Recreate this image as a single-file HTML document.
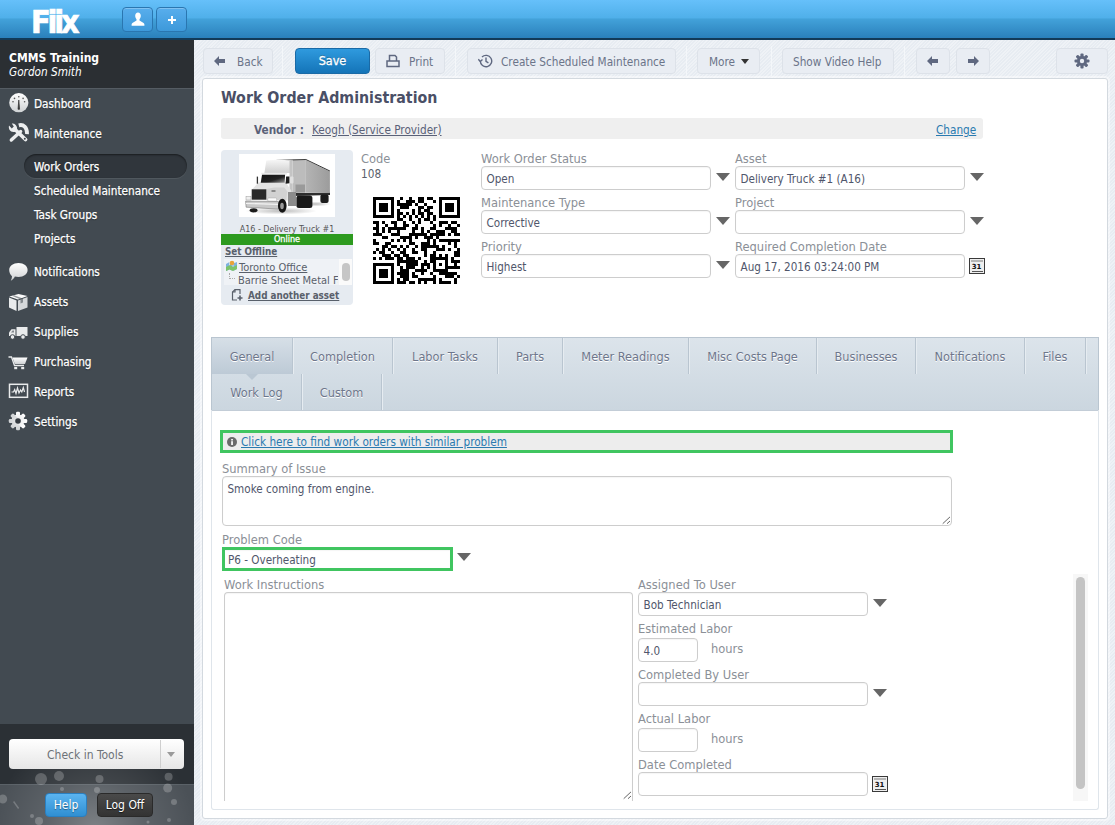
<!DOCTYPE html>
<html><head><meta charset="utf-8"><title>Work Order Administration</title>
<style>
*{box-sizing:border-box;margin:0;padding:0}
html,body{width:1115px;height:825px;overflow:hidden}
body{position:relative;font-family:"DejaVu Sans Condensed","Liberation Sans",sans-serif;font-size:11.7px;color:#4a5068;background:#e7ecf2;
 background-image:repeating-linear-gradient(135deg,rgba(255,255,255,.32) 0,rgba(255,255,255,.32) 1.100px,rgba(255,255,255,0) 1.100px,rgba(255,255,255,0) 2.400px)}
.abs{position:absolute}
a{color:inherit}
/* header */
#hdr{position:absolute;left:0;top:0;width:1115px;height:40px;background:linear-gradient(#66c0fa 0,#50b0ea 46%,#42a1d9 51%,#2a80bb 100%);border-bottom:2px solid #123a58}
.hb{position:absolute;top:7px;height:25px;width:31px;border:1px solid #2a76b0;border-radius:4px;background:linear-gradient(#58aeed,#3d99da);box-shadow:inset 0 1px 0 rgba(255,255,255,.25)}
#logo{position:absolute;left:31px;top:3px;font-family:"DejaVu Sans Condensed","Liberation Sans",sans-serif;font-weight:bold;font-size:32px;color:#fff;letter-spacing:-3.1px;-webkit-text-stroke:.7px #fff;line-height:38px}
/* sidebar */
#side{position:absolute;left:0;top:40px;width:194px;height:785px;background:#424a51}
#user{position:absolute;left:0;top:0;width:194px;height:49px;background:#2b2f33;color:#fff;border-bottom:1px solid #555c63}
.mi{position:absolute;left:34px;margin-top:1px;color:#fff;font-size:11.7px;line-height:14px;white-space:nowrap;text-shadow:0 1px 1px rgba(0,0,0,.5);-webkit-text-stroke:.25px #fff}
.ic{position:absolute;left:8px}
#pill{position:absolute;left:24px;top:114px;width:163px;height:24px;border-radius:12px;background:#30363c;box-shadow:inset 0 1px 2px rgba(0,0,0,.5),0 1px 0 rgba(255,255,255,.08)}
#tools{position:absolute;left:0;top:684px;width:194px;height:60px;background:#2b3035}
#toolbtn{position:absolute;left:9px;top:15px;width:175px;height:30px;border-radius:4px;background:linear-gradient(#ffffff,#e6e6e6);color:#6d7278;font-size:12px;line-height:30px}
#foot{position:absolute;left:0;top:744px;width:194px;height:41px;overflow:hidden}
/* toolbar */
.tb{position:absolute;top:48px;height:26px;border:1px solid #dde2e9;border-radius:4px;background:#e9edf3;color:#6b7489;font-size:11.7px;line-height:26px;white-space:nowrap}
.sep{position:absolute;top:46px;width:1px;height:30px;background:#dbe1e8;border-right:1px solid #f4f7fa}
#panel{position:absolute;left:202px;top:78px;width:906px;height:741px;background:#fff;border:1px solid #d3d9df;border-radius:3px;box-shadow:0 0 0 2px rgba(255,255,255,.45)}
.lbl{position:absolute;font-family:"DejaVu Sans","Liberation Sans",sans-serif;font-size:11.5px;color:#8b9097;white-space:nowrap;line-height:14px}
.inp{position:absolute;height:24px;border:1px solid #cdcdcd;border-radius:4px;background:#fff;color:#50566b;line-height:22px;padding:1px 0 0 4.500px;font-size:11.6px;white-space:nowrap;box-shadow:inset 0 1px 1px rgba(0,0,0,.04)}
.arr{position:absolute;width:0;height:0;border-left:7px solid transparent;border-right:7px solid transparent;border-top:8px solid #666}
.tab{position:absolute;height:36px;border-right:1px solid #b9c5d0;box-shadow:1px 0 0 #e6ecf1;color:#6d768b;font-size:12.6px;line-height:38px;text-align:center;text-shadow:0 1px 0 #fff;white-space:nowrap}
.cal{position:absolute;width:16px;height:16px;border:1px solid #3a3a3a;background:#efefef}
.cal i{position:absolute;left:1px;top:1px;width:12px;height:2px;background:#b5b5b5}
.cal i:after{content:"";position:absolute;left:1px;top:11px;width:11px;height:1px;background:#555}
.cal b{position:absolute;left:0;top:4px;width:13px;text-align:center;font-family:"DejaVu Sans","Liberation Sans",sans-serif;font-weight:bold;font-size:7px;line-height:9px;letter-spacing:-.2px;color:#111}
</style></head><body>

<div id="hdr">
 <div id="logo">Fiix</div>
 <div class="hb" style="left:122px"><svg class="abs" style="left:8px;top:4px" width="14" height="15" viewBox="0 0 14 14" preserveAspectRatio="none"><path d="M7 0.5c1.7 0 2.8 1.3 2.8 3.1 0 1.3-.6 2.5-1.300 3.200v1.200l4.100 2.200c.5.300.8.800.8 1.400v1.200H.6v-1.200c0-.6.3-1.100.8-1.400l4.100-2.200V6.800C4.800 6.100 4.200 4.900 4.200 3.600 4.200 1.800 5.300.5 7 .5z" fill="#fff"/></svg></div>
 <div class="hb" style="left:156px"><svg class="abs" style="left:10px;top:7px" width="10" height="10" viewBox="0 0 10 10"><path d="M4 1h2v3h3v2H6v3H4V6H1V4h3z" fill="#fff"/></svg></div>
</div>

<div id="side">
 <div id="user">
  <div class="abs" style="left:9px;top:11px;font-weight:bold;font-size:12px;line-height:14px;white-space:nowrap">CMMS Training</div>
  <div class="abs" style="left:9px;top:25px;font-style:italic;font-size:11.7px;line-height:14px;white-space:nowrap">Gordon Smith</div>
 </div>
 <div id="pill"></div>
 <div class="mi" style="top:56px">Dashboard</div>
 <div class="mi" style="top:86px">Maintenance</div>
 <div class="mi" style="top:119px">Work Orders</div>
 <div class="mi" style="top:143px">Scheduled Maintenance</div>
 <div class="mi" style="top:167px">Task Groups</div>
 <div class="mi" style="top:191px">Projects</div>
 <div class="mi" style="top:224px">Notifications</div>
 <div class="mi" style="top:254px">Assets</div>
 <div class="mi" style="top:284px">Supplies</div>
 <div class="mi" style="top:314px">Purchasing</div>
 <div class="mi" style="top:344px">Reports</div>
 <div class="mi" style="top:374px">Settings</div>

 <svg class="abs" style="left:9px;top:53px" width="20" height="20" viewBox="0 0 20 20"><defs><linearGradient id="ig" x1="0" y1="0" x2="0" y2="1"><stop offset="0" stop-color="#fff"/><stop offset="1" stop-color="#cfd2d4"/></linearGradient></defs><circle cx="9.800" cy="9.700" r="9.600" fill="url(#ig)"/><path d="M9 16.300L9.800 7l.8 9.300z" fill="#333" stroke="#333" stroke-width=".7"/><g fill="#555"><circle cx="9.800" cy="3.800" r=".8"/><circle cx="5.500" cy="5.400" r=".8"/><circle cx="14.100" cy="5.400" r=".8"/><circle cx="4" cy="8.700" r=".8"/><circle cx="15.600" cy="8.700" r=".8"/></g></svg>
 <svg class="abs" style="left:8px;top:83px" width="21" height="20" viewBox="0 0 21 20"><g fill="none" stroke="#eceeef"><path d="M12.600 8.500L3.300 17" stroke-width="3.400" stroke-linecap="round"/><path d="M10.800 2.300c4.500-1.300 8.500 2 8.200 8.800" stroke-width="3.800"/><path d="M6.500 6L17.500 16.500" stroke-width="3.800" stroke-linecap="round"/></g><path d="M1 2.500C.2 5.500 2 9 5.500 9c2.500 0 4-2 3.500-4.500C8.500 2 6.500.2 3.800.6L5.800 3.500 3.800 5.400z" fill="#eceeef"/><circle cx="16.800" cy="15.800" r="1" fill="#424a51"/></svg>
 <svg class="abs" style="left:8px;top:222px" width="21" height="20" viewBox="0 0 21 20"><path d="M10.500 1C15.800 1 19.600 4 19.600 8s-3.800 7-9.100 7c-1.300 0-2.500-.2-3.600-.5C5.800 16.500 4.500 18 2.800 18.800c.8-1.500 1.200-3 1.200-4.600C2.300 12.800 1.200 10.500 1.200 8 1.200 4 5.200 1 10.500 1z" fill="url(#ig)"/></svg>
 <svg class="abs" style="left:8px;top:253px" width="21" height="19" viewBox="0 0 21 19"><path d="M1 4.500L8.500 7.500v10.500L1 14.500z" fill="#e9ebec"/><path d="M10 7.500L19.500 4v10.500L10 18z" fill="#d5d8da"/><path d="M1.200 3.500L10.500 1l9 2-9.500 3.500z" fill="#fbfbfb"/><path d="M6 2.200l9 3.300v4l-2.500 1V6.500L4.500 3z" fill="#424a51" opacity=".55"/></svg>
 <svg class="abs" style="left:8px;top:286px" width="21" height="14" viewBox="0 0 21 14"><path d="M8.500 1h11v9h-11z" fill="#e9ebec"/><path d="M1 10V6.500l2.500-3.300h4V10z" fill="#e9ebec"/><path d="M3 6.500l1.500-2h1.500v2z" fill="#424a51" opacity=".6"/><circle cx="4.500" cy="11" r="2.300" fill="#e9ebec" stroke="#424a51" stroke-width="1"/><circle cx="15" cy="11" r="2.300" fill="#e9ebec" stroke="#424a51" stroke-width="1"/></svg>
 <svg class="abs" style="left:8px;top:316px" width="21" height="14" viewBox="0 0 21 14"><path d="M.5 1h3l3 8.500h9.500" fill="none" stroke="#e9ebec" stroke-width="1.300"/><path d="M4.500 1.500h15l-2.500 6.500H6.700z" fill="url(#ig)"/><rect x="6.200" y="11" width="3" height="2.200" fill="#e9ebec"/><rect x="13.200" y="11" width="3" height="2.200" fill="#e9ebec"/></svg>
 <svg class="abs" style="left:8px;top:343px" width="21" height="16" viewBox="0 0 21 16"><rect x="1.500" y="1.300" width="18" height="13" fill="none" stroke="#e9ebec" stroke-width="1.500"/><path d="M3.500 9h2l1.200-2.500 1.300 4 1.500-5.500 1.500 5 1.500-3 1.300 2 1.500-4.500 1.200 4.500" fill="none" stroke="#e9ebec" stroke-width="1.200"/></svg>
 <svg class="abs" style="left:8px;top:371px" width="20" height="20" viewBox="-10 -10 20 20"><g fill="url(#ig)"><circle r="6.500"/><g id="st"><rect x="-2" y="-9.200" width="4" height="18.400" rx="1.300"/></g><use href="#st" transform="rotate(45)"/><use href="#st" transform="rotate(90)"/><use href="#st" transform="rotate(135)"/></g><circle r="2.800" fill="#353b41"/></svg>

 <div id="tools"><div id="toolbtn"><span class="abs" style="left:38px;top:1px">Check in Tools</span><div class="abs" style="left:151px;top:1px;width:1px;height:28px;background:#cfcfcf"></div><div class="abs" style="left:158px;top:13px;width:0;height:0;border-left:4px solid transparent;border-right:4px solid transparent;border-top:5px solid #9a9a9a"></div></div></div>
 <div class="abs" style="left:0;top:744px;width:194px;height:41px;background:#4b5157;border-top:1px solid #5a6167"></div>
 <svg class="abs" style="left:0;top:728px" width="194" height="57" viewBox="0 768 194 57"><defs><radialGradient id="bk" cx="95" cy="830" r="100" gradientUnits="userSpaceOnUse"><stop offset="0" stop-color="#fff" stop-opacity=".28"/><stop offset=".5" stop-color="#fff" stop-opacity=".1"/><stop offset="1" stop-color="#fff" stop-opacity="0"/></radialGradient></defs><rect x="0" y="768" width="194" height="57" fill="url(#bk)"/><g fill="#fff" fill-opacity=".22"><circle cx="41" cy="779" r="6"/><circle cx="59" cy="776" r="5"/><circle cx="99.500" cy="779" r="4"/><circle cx="168.600" cy="776.700" r="4"/><circle cx="167.700" cy="788" r="4.500"/><circle cx="2.700" cy="799" r="4.500"/><circle cx="174" cy="802" r="3"/><circle cx="62" cy="789" r="2"/><circle cx="97" cy="790" r="3"/><circle cx="32" cy="816" r="2"/><circle cx="39" cy="821" r="4"/><circle cx="169" cy="820" r="2"/><circle cx="148" cy="822" r="1.500"/><path d="M13 802l5 7 1.200-1-5-7z"/></g></svg>
 <div id="foot" style="background:none">
  <div class="abs" style="left:45px;top:9px;width:42px;height:24px;border-radius:4px;border:1px solid #2a7fc0;background:linear-gradient(#5bb4f0,#2f8fd2);color:#fff;font-size:12px;line-height:22px;text-align:center;text-shadow:0 1px 1px rgba(0,0,0,.4)">Help</div>
  <div class="abs" style="left:97px;top:9px;width:56px;height:24px;border-radius:4px;border:1px solid #2a2a2a;background:linear-gradient(#4a4a4a,#333);color:#fff;font-size:12px;line-height:22px;text-align:center;text-shadow:0 1px 1px rgba(0,0,0,.6)">Log Off</div>
 </div>
</div>

<!-- TOOLBAR -->

<div class="tb" style="left:203px;width:70px"><svg class="abs" style="left:10px;top:7px" width="11" height="10" viewBox="0 0 11 10"><path d="M0 5L5 0v3h6v4H5v3z" fill="#5f6880"/></svg><span class="abs" style="left:33px;top:0">Back</span></div>
<div class="sep" style="left:282px"></div>
<div class="abs" style="left:295px;top:48px;width:75px;height:26px;border:1px solid #1a6aa6;border-radius:4px;background:linear-gradient(#2f9ade,#1474b8);color:#fff;font-size:12.5px;line-height:24px;text-align:center;text-shadow:0 -1px 0 rgba(0,0,0,.3);-webkit-text-stroke:.3px #fff">Save</div>
<div class="tb" style="left:375px;width:70px"><svg class="abs" style="left:10px;top:5px" width="14" height="14" viewBox="0 0 14 14" fill="none" stroke="#5f6880" stroke-width="1.500"><path d="M3.500 7V1.500h5.500L10.500 3v4"/><path d="M1 7h12v5.500H1z"/></svg><span class="abs" style="left:33px;top:0">Print</span></div>
<div class="sep" style="left:455px"></div>
<div class="tb" style="left:467px;width:209px"><svg class="abs" style="left:10px;top:5px" width="15" height="14" viewBox="0 0 15 14" fill="none" stroke="#5f6880" stroke-width="1.400"><path d="M2.300 7a5.700 5.700 0 1 0 1.700-4"/><path d="M8 3.500V7.300l2.400 1.500"/><path d="M0.300 5.300l2 2.200 2.200-2" /></svg><span class="abs" style="left:33px;top:0">Create Scheduled Maintenance</span></div>
<div class="sep" style="left:686px"></div>
<div class="tb" style="left:697px;width:63px"><span class="abs" style="left:11px;top:0">More</span><div class="abs" style="left:43px;top:10px;width:0;height:0;border-left:4px solid transparent;border-right:4px solid transparent;border-top:5px solid #333"></div></div>
<div class="sep" style="left:771px"></div>
<div class="tb" style="left:782px;width:112px"><span class="abs" style="left:10px;top:0">Show Video Help</span></div>
<div class="sep" style="left:904px"></div>
<div class="tb" style="left:916px;width:34px"><svg class="abs" style="left:10px;top:7px" width="11" height="10" viewBox="0 0 11 10"><path d="M0 5L5 0v3h6v4H5v3z" fill="#5f6880"/></svg></div>
<div class="tb" style="left:956px;width:34px"><svg class="abs" style="left:11px;top:7px" width="11" height="10" viewBox="0 0 11 10"><path d="M11 5L6 0v3H0v4h6v3z" fill="#5f6880"/></svg></div>
<div class="tb" style="left:1056px;width:52px"><svg class="abs" style="left:17px;top:4px" width="16" height="16" viewBox="-8 -8 16 16"><g fill="#5f6880"><circle r="5"/><g id="gt"><rect x="-1.600" y="-7.500" width="3.200" height="15" rx="1"/></g><use href="#gt" transform="rotate(45)"/><use href="#gt" transform="rotate(90)"/><use href="#gt" transform="rotate(135)"/></g><circle r="2.200" fill="#e9edf3"/></svg></div>

<div id="panel"></div>

<div class="abs" style="left:221px;top:88px;font-weight:bold;font-size:15.8px;line-height:20px;color:#4a4f66;white-space:nowrap">Work Order Administration</div>
<div class="abs" style="left:221px;top:118px;width:762px;height:21px;background:#efefef;border-radius:3px"></div>
<div class="abs" style="left:254px;top:123px;font-weight:bold;font-size:11.7px;line-height:14px;color:#5a6178;white-space:nowrap">Vendor :</div>
<div class="abs" style="left:312px;top:123px;font-size:11.7px;line-height:14px;color:#5a6178;text-decoration:underline;white-space:nowrap">Keogh (Service Provider)</div>
<div class="abs" style="left:936px;top:123px;font-size:11.7px;line-height:14px;color:#2a7ab0;text-decoration:underline;white-space:nowrap">Change</div>

<!-- asset box -->
<div class="abs" style="left:221px;top:150px;width:132px;height:155px;background:#e6ebf1;border-radius:4px"></div>
<svg class="abs" style="left:239px;top:154px" width="96" height="63" viewBox="0 0 96 63">
<defs>
<linearGradient id="tg1" x1="0" y1="0" x2="0" y2="1"><stop offset="0" stop-color="#f6f6f6"/><stop offset="1" stop-color="#cfcfcf"/></linearGradient>
<linearGradient id="tg2" x1="0" y1="0" x2="1" y2="1"><stop offset="0" stop-color="#111"/><stop offset=".6" stop-color="#222"/><stop offset="1" stop-color="#999"/></linearGradient>
<linearGradient id="tg3" x1="0" y1="0" x2="1" y2="0"><stop offset="0" stop-color="#b4b4b4"/><stop offset="1" stop-color="#9c9c9c"/></linearGradient>
<radialGradient id="tg4"><stop offset="0" stop-color="#bbb"/><stop offset="1" stop-color="#bbb" stop-opacity="0"/></radialGradient>
</defs>
<rect width="96" height="63" fill="#fff"/>
<ellipse cx="42" cy="57" rx="36" ry="3.500" fill="url(#tg4)"/>
<ellipse cx="76" cy="50" rx="16" ry="2.500" fill="url(#tg4)"/>
<path d="M54 39l37-.6v2.600l-37 1z" fill="#2e2e2e"/>
<rect x="81.400" y="40.500" width="8.200" height="8.500" rx="2" fill="#1c1c1c"/>
<rect x="57.400" y="41.400" width="16" height="12.700" rx="2.500" fill="#1a1a1a"/>
<path d="M66.900 6.100L90.900 17.400V38.600H66.900z" fill="url(#tg3)"/>
<path d="M53.700 5.600l13.200.5V38.600l-13.200.4z" fill="#bcbcbc"/>
<path d="M56.500 30.500h9.500v8h-9.500z" fill="#9a9a9a"/>
<path d="M37.500 6.400L66.900 5.500 90.900 17" fill="none" stroke="#3a3a3a" stroke-width="1"/>
<path d="M27.300 6.600c8-1 16-1 24.500 0l.6 12.500H25.400z" fill="url(#tg1)"/>
<path d="M50.500 7l3.200-1V39h-3.200z" fill="#c4c4c4"/>
<path d="M12.500 36l7-7.500 27-.5 6 9-1.500 9.500H27.500l-1-10.500z" fill="#e3e3e3"/>
<path d="M27.300 35l8-1.500 10 0 3 4-1 8.500H27.500z" fill="#d2d2d2"/>
<path d="M23.100 20.500h23l-.4 8.200h-24z" fill="url(#tg2)"/>
<path d="M22.300 18.800h25.500v1.700H22.300z" fill="#e8e8e8"/>
<path d="M47.100 22.600h3.300v6.600l-3.800.5z" fill="#1d1d1d"/>
<rect x="51" y="22.500" width="3.500" height="7" rx="1" fill="#e0e0e0"/>
<path d="M18.400 22.600v7.100" stroke="#333" stroke-width="1.300"/>
<rect x="12.700" y="35.300" width="14.600" height="10.400" fill="#2a2a2a"/>
<rect x="7" y="42.500" width="5" height="3.500" fill="#efefef" stroke="#888" stroke-width=".4"/>
<rect x="28.700" y="44" width="9" height="3.200" rx="1" fill="#fdfdfd" stroke="#999" stroke-width=".4"/>
<path d="M32.500 37h4" stroke="#444" stroke-width="1"/>
<path d="M49 38h8v14h-8z" fill="#8c8c8c"/>
<ellipse cx="14.600" cy="56.300" rx="3.900" ry="2.100" fill="#1b1b1b"/>
<path d="M6.600 47.100l32.900.4v7.600L7.100 53.200z" fill="#c9c9c9" stroke="#666" stroke-width=".5"/>
<path d="M7 49.500l32 .8" stroke="#f3f3f3" stroke-width="1.200"/>
<ellipse cx="43.300" cy="51.800" rx="4.300" ry="7" fill="#161616"/>
<ellipse cx="43" cy="52" rx="1.800" ry="3.200" fill="#9a9a9a"/>
</svg>
<div class="abs" style="left:221px;top:223px;width:132px;text-align:center;font-size:8.900px;line-height:12px;color:#555;white-space:nowrap">A16 - Delivery Truck #1</div>
<div class="abs" style="left:221px;top:234px;width:132px;height:11px;background:#2d9a1f;color:#fff;font-size:9px;line-height:11px;text-align:center;-webkit-text-stroke:.3px #fff">Online</div>
<div class="abs" style="left:225px;top:246px;font-size:9.800px;font-weight:bold;line-height:12px;color:#59606b;text-decoration:underline;white-space:nowrap">Set Offline</div>
<div class="abs" style="left:224px;top:259px;width:128px;height:26px;background:#eff2f6;overflow:hidden">
 <div class="abs" style="left:115px;top:0;width:13px;height:26px;background:#fafafa"></div>
 <div class="abs" style="left:118px;top:4px;width:8px;height:18px;border-radius:4px;background:#c6c6c6"></div>
 <svg class="abs" style="left:2px;top:1px" width="11" height="11" viewBox="0 0 11 11"><path d="M0 4l3.500-2 3.500 1.500L11 2v7l-4 2-3.500-1.500L0 11z" fill="#7fb2e0"/><path d="M3.500 2v7.500M7 3.500V11" stroke="#fff" stroke-width=".6"/><circle cx="6" cy="3" r="2.300" fill="#e8a33a"/><path d="M0 7l4-2 3 2 4-2v4l-4 2-3.500-1.500L0 11z" fill="#7cc36a"/></svg>
 <div class="abs" style="left:15px;top:2px;font-size:11px;line-height:13px;color:#59606b;text-decoration:underline;white-space:nowrap">Toronto Office</div>
 <div class="abs" style="left:5px;top:14px;width:6px;height:6px;border-left:1px dotted #aaa;border-bottom:1px dotted #aaa"></div>
 <div class="abs" style="left:14px;top:15px;width:100px;overflow:hidden;font-size:11px;line-height:13px;color:#59606b;white-space:nowrap">Barrie Sheet Metal Fabrication</div>
</div>
<svg class="abs" style="left:231px;top:289px" width="13" height="12" viewBox="0 0 13 12" fill="none" stroke="#59606b" stroke-width="1.200"><path d="M6 11H1.500V3L4 .6h5V5"/><path d="M4 .6V3H1.500"/><path d="M9 6.500v5M6.500 9h5" stroke-width="1.600"/></svg>
<div class="abs" style="left:248px;top:290px;font-size:9.800px;font-weight:bold;line-height:12px;color:#59606b;text-decoration:underline;white-space:nowrap">Add another asset</div>

<div class="lbl" style="left:361px;top:152px">Code</div>
<div class="abs" style="left:361px;top:167px;font-size:11.7px;line-height:14px;color:#59606b">108</div>
<svg class="abs" style="left:373px;top:197px" width="87" height="87" viewBox="0 0 29 29" shape-rendering="crispEdges"><rect width="29" height="29" fill="#fff"/><path fill="#000" d="M0 0h7v1h-7zM9 0h1v1h-1zM12 0h1v1h-1zM15 0h2v1h-2zM18 0h2v1h-2zM22 0h7v1h-7zM0 1h1v1h-1zM6 1h1v1h-1zM8 1h1v1h-1zM11 1h3v1h-3zM15 1h2v1h-2zM20 1h1v1h-1zM22 1h1v1h-1zM28 1h1v1h-1zM0 2h1v1h-1zM2 2h3v1h-3zM6 2h1v1h-1zM8 2h5v1h-5zM14 2h1v1h-1zM17 2h1v1h-1zM22 2h1v1h-1zM24 2h3v1h-3zM28 2h1v1h-1zM0 3h1v1h-1zM2 3h3v1h-3zM6 3h1v1h-1zM9 3h3v1h-3zM15 3h2v1h-2zM18 3h2v1h-2zM22 3h1v1h-1zM24 3h3v1h-3zM28 3h1v1h-1zM0 4h1v1h-1zM2 4h3v1h-3zM6 4h1v1h-1zM8 4h1v1h-1zM13 4h1v1h-1zM15 4h1v1h-1zM17 4h2v1h-2zM22 4h1v1h-1zM24 4h3v1h-3zM28 4h1v1h-1zM0 5h1v1h-1zM6 5h1v1h-1zM8 5h2v1h-2zM11 5h1v1h-1zM13 5h1v1h-1zM15 5h2v1h-2zM18 5h2v1h-2zM22 5h1v1h-1zM28 5h1v1h-1zM0 6h7v1h-7zM8 6h1v1h-1zM10 6h1v1h-1zM12 6h1v1h-1zM14 6h1v1h-1zM16 6h1v1h-1zM18 6h1v1h-1zM20 6h1v1h-1zM22 6h7v1h-7zM8 7h2v1h-2zM12 7h1v1h-1zM15 7h1v1h-1zM17 7h2v1h-2zM20 7h1v1h-1zM0 8h2v1h-2zM3 8h1v1h-1zM6 8h2v1h-2zM10 8h1v1h-1zM13 8h1v1h-1zM15 8h1v1h-1zM19 8h1v1h-1zM22 8h3v1h-3zM26 8h2v1h-2zM1 9h1v1h-1zM4 9h1v1h-1zM7 9h1v1h-1zM10 9h2v1h-2zM14 9h1v1h-1zM20 9h1v1h-1zM22 9h1v1h-1zM25 9h1v1h-1zM28 9h1v1h-1zM0 10h2v1h-2zM3 10h1v1h-1zM5 10h6v1h-6zM13 10h2v1h-2zM16 10h1v1h-1zM19 10h2v1h-2zM24 10h4v1h-4zM1 11h1v1h-1zM3 11h1v1h-1zM5 11h1v1h-1zM8 11h1v1h-1zM13 11h1v1h-1zM16 11h1v1h-1zM18 11h1v1h-1zM21 11h3v1h-3zM26 11h2v1h-2zM0 12h3v1h-3zM6 12h3v1h-3zM12 12h6v1h-6zM19 12h5v1h-5zM25 12h1v1h-1zM27 12h2v1h-2zM3 13h2v1h-2zM9 13h4v1h-4zM14 13h1v1h-1zM17 13h3v1h-3zM21 13h1v1h-1zM0 14h1v1h-1zM6 14h1v1h-1zM8 14h1v1h-1zM10 14h1v1h-1zM12 14h1v1h-1zM18 14h1v1h-1zM20 14h1v1h-1zM22 14h7v1h-7zM0 15h2v1h-2zM4 15h2v1h-2zM12 15h2v1h-2zM16 15h3v1h-3zM20 15h1v1h-1zM25 15h1v1h-1zM27 15h1v1h-1zM3 16h2v1h-2zM6 16h2v1h-2zM9 16h1v1h-1zM11 16h1v1h-1zM14 16h1v1h-1zM16 16h6v1h-6zM23 16h1v1h-1zM27 16h1v1h-1zM1 17h1v1h-1zM3 17h1v1h-1zM5 17h1v1h-1zM8 17h1v1h-1zM10 17h1v1h-1zM13 17h1v1h-1zM16 17h2v1h-2zM21 17h3v1h-3zM25 17h1v1h-1zM28 17h1v1h-1zM0 18h1v1h-1zM2 18h2v1h-2zM6 18h1v1h-1zM9 18h2v1h-2zM13 18h2v1h-2zM17 18h1v1h-1zM20 18h1v1h-1zM27 18h2v1h-2zM3 19h3v1h-3zM7 19h2v1h-2zM10 19h2v1h-2zM17 19h1v1h-1zM19 19h2v1h-2zM22 19h1v1h-1zM24 19h1v1h-1zM27 19h2v1h-2zM0 20h1v1h-1zM2 20h1v1h-1zM4 20h3v1h-3zM8 20h2v1h-2zM11 20h3v1h-3zM15 20h1v1h-1zM19 20h6v1h-6zM26 20h1v1h-1zM8 21h7v1h-7zM17 21h1v1h-1zM19 21h2v1h-2zM24 21h1v1h-1zM26 21h3v1h-3zM0 22h7v1h-7zM8 22h1v1h-1zM11 22h4v1h-4zM16 22h3v1h-3zM20 22h1v1h-1zM22 22h1v1h-1zM24 22h1v1h-1zM27 22h1v1h-1zM0 23h1v1h-1zM6 23h1v1h-1zM9 23h1v1h-1zM11 23h3v1h-3zM16 23h1v1h-1zM18 23h1v1h-1zM20 23h1v1h-1zM24 23h5v1h-5zM0 24h1v1h-1zM2 24h3v1h-3zM6 24h1v1h-1zM9 24h3v1h-3zM14 24h4v1h-4zM20 24h5v1h-5zM0 25h1v1h-1zM2 25h3v1h-3zM6 25h1v1h-1zM8 25h4v1h-4zM13 25h1v1h-1zM16 25h1v1h-1zM19 25h1v1h-1zM22 25h6v1h-6zM0 26h1v1h-1zM2 26h3v1h-3zM6 26h1v1h-1zM9 26h3v1h-3zM13 26h2v1h-2zM20 26h1v1h-1zM24 26h3v1h-3zM28 26h1v1h-1zM0 27h1v1h-1zM6 27h1v1h-1zM8 27h1v1h-1zM10 27h2v1h-2zM15 27h6v1h-6zM22 27h1v1h-1zM27 27h1v1h-1zM0 28h7v1h-7zM8 28h3v1h-3zM12 28h2v1h-2zM15 28h1v1h-1zM17 28h1v1h-1zM20 28h1v1h-1zM22 28h4v1h-4zM27 28h1v1h-1z"/></svg>

<!-- top form -->
<div class="lbl" style="left:481px;top:152px">Work Order Status</div>
<div class="inp" style="left:481px;top:166px;width:230px">Open</div><div class="arr" style="left:716px;top:173px"></div>
<div class="lbl" style="left:481px;top:196px">Maintenance Type</div>
<div class="inp" style="left:481px;top:210px;width:230px">Corrective</div><div class="arr" style="left:716px;top:217px"></div>
<div class="lbl" style="left:481px;top:240px">Priority</div>
<div class="inp" style="left:481px;top:254px;width:230px">Highest</div><div class="arr" style="left:716px;top:261px"></div>
<div class="lbl" style="left:735px;top:152px">Asset</div>
<div class="inp" style="left:735px;top:166px;width:230px">Delivery Truck #1 (A16)</div><div class="arr" style="left:970px;top:173px"></div>
<div class="lbl" style="left:735px;top:196px">Project</div>
<div class="inp" style="left:735px;top:210px;width:230px"></div><div class="arr" style="left:970px;top:217px"></div>
<div class="lbl" style="left:735px;top:240px">Required Completion Date</div>
<div class="inp" style="left:735px;top:254px;width:230px">Aug 17, 2016 03:24:00 PM</div>
<div class="cal" style="left:969px;top:258px"><i></i><b>31</b></div>

<!-- tabs -->
<div class="abs" style="left:211px;top:337px;width:888px;height:74px;border:1px solid #b9c5d0;border-bottom-color:#c3cdd7;background:linear-gradient(#dce4eb,#cbd6df)"></div>
<div class="abs" style="left:212px;top:338px;width:81px;height:36px;background:linear-gradient(#d6dfe7,#bdcad6)"></div>
<div class="abs" style="left:246px;top:374px;width:0;height:0;border-left:6px solid transparent;border-right:6px solid transparent;border-top:6px solid #bac7d3"></div>
<div class="tab" style="left:212px;top:338px;width:81px">General</div>
<div class="tab" style="left:293px;top:338px;width:100px">Completion</div>
<div class="tab" style="left:393px;top:338px;width:105px">Labor Tasks</div>
<div class="tab" style="left:498px;top:338px;width:65px">Parts</div>
<div class="tab" style="left:563px;top:338px;width:126px">Meter Readings</div>
<div class="tab" style="left:689px;top:338px;width:128px">Misc Costs Page</div>
<div class="tab" style="left:817px;top:338px;width:99px">Businesses</div>
<div class="tab" style="left:916px;top:338px;width:109px">Notifications</div>
<div class="tab" style="left:1025px;top:338px;width:61px">Files</div>
<div class="tab" style="left:212px;top:374px;width:90px">Work Log</div>
<div class="tab" style="left:302px;top:374px;width:80px">Custom</div>
<div class="abs" style="left:211px;top:410px;width:888px;height:400px;border:1px solid #dfe5eb;border-top:none;border-radius:0 0 3px 3px"></div>

<!-- lower form -->
<div class="abs" style="left:220px;top:430px;width:733px;height:23px;border:3px solid #40c560;background:#ededed"></div>
<svg class="abs" style="left:227px;top:437px" width="10" height="10" viewBox="0 0 10 10"><circle cx="5" cy="5" r="5" fill="#6a6a6a"/><rect x="4.200" y="4.200" width="1.700" height="3.800" fill="#fff"/><rect x="4.200" y="2" width="1.700" height="1.500" fill="#fff"/></svg>
<div class="abs" style="left:241px;top:435px;font-size:11.7px;line-height:14px;color:#2a7ab0;text-decoration:underline;white-space:nowrap">Click here to find work orders with similar problem</div>
<div class="lbl" style="left:222px;top:462px">Summary of Issue</div>
<div class="inp" style="left:222px;top:476px;width:730px;height:50px">Smoke coming from engine.</div>
<svg class="abs" style="left:942px;top:516px" width="9" height="9" viewBox="0 0 9 9"><path d="M.7 7.700L8 .9M5 7.700L8 5" stroke="#555" stroke-width=".9" fill="none"/></svg>
<svg class="abs" style="left:623px;top:791px;z-index:2" width="9" height="9" viewBox="0 0 9 9"><path d="M.7 7.700L8 .9M5 7.700L8 5" stroke="#555" stroke-width=".9" fill="none"/></svg>
<div class="lbl" style="left:222px;top:533px">Problem Code</div>
<div class="inp" style="left:222px;top:547px;width:231px;height:24px;border:3px solid #40c560;border-radius:0;line-height:18px;padding-left:3px">P6 - Overheating</div><div class="arr" style="left:457px;top:553px"></div>
<div class="lbl" style="left:224px;top:578px">Work Instructions</div>
<div class="inp" style="left:224px;top:592px;width:409px;height:209px;border-radius:4px 4px 0 0;border-bottom:none"></div>
<div class="lbl" style="left:638px;top:578px">Assigned To User</div>
<div class="inp" style="left:638px;top:592px;width:230px">Bob Technician</div><div class="arr" style="left:873px;top:599px"></div>
<div class="lbl" style="left:638px;top:622px">Estimated Labor</div>
<div class="inp" style="left:638px;top:638px;width:60px">4.0</div><div class="lbl" style="left:711px;top:642px">hours</div>
<div class="lbl" style="left:638px;top:668px">Completed By User</div>
<div class="inp" style="left:638px;top:682px;width:230px"></div><div class="arr" style="left:873px;top:689px"></div>
<div class="lbl" style="left:638px;top:712px">Actual Labor</div>
<div class="inp" style="left:638px;top:728px;width:60px"></div><div class="lbl" style="left:711px;top:732px">hours</div>
<div class="lbl" style="left:638px;top:758px">Date Completed</div>
<div class="inp" style="left:638px;top:772px;width:230px"></div>
<div class="cal" style="left:872px;top:776px"><i></i><b>31</b></div>
<div class="abs" style="left:1073px;top:574px;width:15px;height:227px;background:#f7f7f7"></div>
<div class="abs" style="left:1076px;top:577px;width:9px;height:212px;border-radius:5px;background:#c4c4c4"></div>

</body></html>
